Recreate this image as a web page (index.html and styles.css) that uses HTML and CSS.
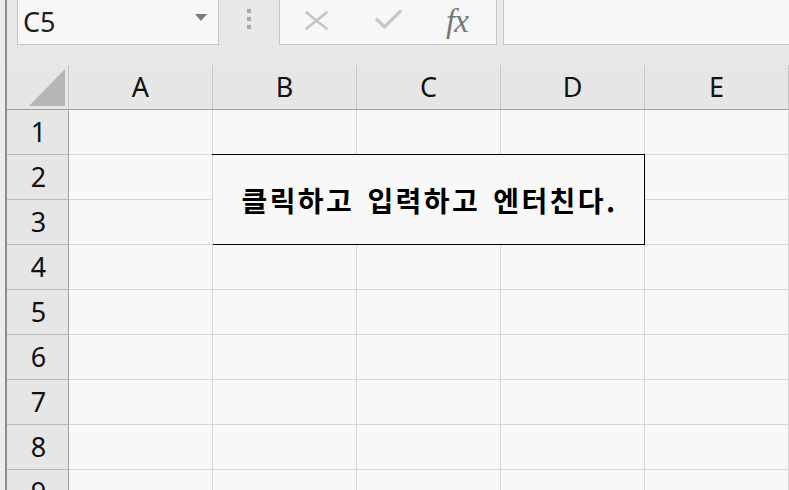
FILE: index.html
```html
<!DOCTYPE html>
<html lang="ko">
<head>
<meta charset="utf-8">
<title>Sheet</title>
<link rel="stylesheet" href="styles.css">
</head>
<body>
<div class="app">
  <div class="formula-bar">
    <div class="name-box"><span class="name">C5</span><span class="caret"></span></div>
    <div class="grip"><i></i><i></i><i></i></div>
    <div class="fx-box">
      <svg class="ico-x" width="23" height="19" viewBox="0 0 23 19"><path d="M1.5 1.5 L21.5 17.5 M21.5 1.5 L1.5 17.5" stroke="#c4c4c4" stroke-width="2.6" fill="none" stroke-linecap="round"/></svg>
      <svg class="ico-check" width="27" height="21" viewBox="0 0 27 21"><path d="M2 10.5 L9.5 18 L25 2.5" stroke="#c8c8c8" stroke-width="3.4" fill="none" stroke-linecap="round" stroke-linejoin="round"/></svg>
      <span class="fx">fx</span>
    </div>
    <div class="formula-input"></div>
  </div>
  <div class="sheet">
    <div class="corner"><svg width="61" height="44" viewBox="0 0 61 44"><polygon points="22,41 58,41 58,4" fill="#b6b6b6"/></svg></div>
    <div class="hd">A</div><div class="hd">B</div><div class="hd">C</div><div class="hd">D</div><div class="hd">E</div>

    <div class="rh">1</div><div class="c"></div><div class="c"></div><div class="c"></div><div class="c"></div><div class="c"></div>

    <div class="merged">클릭하고 입력하고 엔터친다.</div>
    <div class="rh">2</div><div class="c"></div><div class="c"></div>
    <div class="rh">3</div><div class="c"></div><div class="c"></div>

    <div class="rh">4</div><div class="c"></div><div class="c"></div><div class="c"></div><div class="c"></div><div class="c"></div>
    <div class="rh">5</div><div class="c"></div><div class="c"></div><div class="c"></div><div class="c"></div><div class="c"></div>
    <div class="rh">6</div><div class="c"></div><div class="c"></div><div class="c"></div><div class="c"></div><div class="c"></div>
    <div class="rh">7</div><div class="c"></div><div class="c"></div><div class="c"></div><div class="c"></div><div class="c"></div>
    <div class="rh">8</div><div class="c"></div><div class="c"></div><div class="c"></div><div class="c"></div><div class="c"></div>
    <div class="rh">9</div><div class="c"></div><div class="c"></div><div class="c"></div><div class="c"></div><div class="c"></div>
  </div>
</div>
</body>
</html>
```

FILE: styles.css
```css
html, body {
  margin: 0;
  padding: 0;
  height: 100%;
  overflow: hidden;
  background: #ececec;
}

.app {
  margin-left: 5px;
  border-left: 2px solid #8e8e8e;
  height: 100vh;
  overflow: hidden;
  background: #e8e8e8;
  display: flex;
  flex-direction: column;
  font-family: "Noto Sans", "Open Sans", sans-serif;
  color: #111;
}

.formula-bar {
  display: flex;
  height: 45px;
  flex: none;
  margin-bottom: 20px;
}

.name-box {
  box-sizing: border-box;
  margin-left: 10px;
  width: 202px;
  border: 1px solid #c6c6c6;
  border-top: none;
  background: #f7f7f7;
  display: flex;
  align-items: center;
  justify-content: space-between;
  padding: 0 11px 0 5px;
}

.name {
  font-size: 27px;
  line-height: 44px;
  color: #1e1e1e;
}

.caret {
  align-self: flex-start;
  margin-top: 14px;
  width: 0;
  height: 0;
  border-left: 6.5px solid transparent;
  border-right: 6.5px solid transparent;
  border-top: 7px solid #7b7b7b;
}

.grip {
  width: 60px;
  display: flex;
  flex-direction: column;
  align-items: center;
  padding-top: 9px;
  gap: 4px;
}

.grip i {
  display: block;
  width: 4px;
  height: 4px;
  background: #a9a9a9;
}

.fx-box {
  box-sizing: border-box;
  width: 218px;
  border: 1px solid #c6c6c6;
  border-top: none;
  background: #f7f7f7;
  display: flex;
  align-items: flex-start;
  padding-left: 25px;
}

.ico-x {
  margin-top: 11px;
}

.ico-check {
  margin-top: 9px;
  margin-left: 47px;
}

.fx {
  margin-left: 44px;
  font-family: "Liberation Serif", "DejaVu Serif", serif;
  font-style: italic;
  font-size: 33px;
  line-height: 42px;
  letter-spacing: -1px;
  color: #777;
}

.formula-input {
  flex: 1;
  margin-left: 6px;
  border-left: 1px solid #c6c6c6;
  border-bottom: 1px solid #c6c6c6;
  background: #f7f7f7;
}

.sheet {
  display: grid;
  grid-template-columns: 62px repeat(5, 144px);
  grid-auto-rows: 45px;
}

.sheet > div {
  box-sizing: border-box;
}

.corner {
  background: #e6e6e6;
  border-right: 1px solid #c4c4c4;
  border-bottom: 1px solid #9f9f9f;
}

.corner svg {
  display: block;
}

.hd {
  background: #e6e6e6;
  border-right: 1px solid #c6c6c6;
  border-bottom: 1px solid #9f9f9f;
  text-align: center;
  font-size: 27px;
  line-height: 44px;
}

.rh {
  background: #e6e6e6;
  border-right: 1px solid #9f9f9f;
  border-bottom: 1px solid #b9b9b9;
  text-align: center;
  font-size: 27px;
  line-height: 44px;
  padding-left: 2px;
}

.c {
  background: #f8f8f8;
  border-right: 1px solid #d6d6d6;
  border-bottom: 1px solid #d6d6d6;
}

.merged {
  grid-column: 3 / 6;
  grid-row: 3 / 5;
  margin: -1px 0 0 -1px;
  border: 1px solid #000;
  background: #f8f8f8;
  display: flex;
  align-items: center;
  justify-content: center;
  font-family: "Noto Sans CJK KR", "Noto Sans", sans-serif;
  font-weight: 700;
  font-size: 28px;
  letter-spacing: 2.4px;
  word-spacing: 3px;
  padding-left: 2px;
  color: #000;
}
```
